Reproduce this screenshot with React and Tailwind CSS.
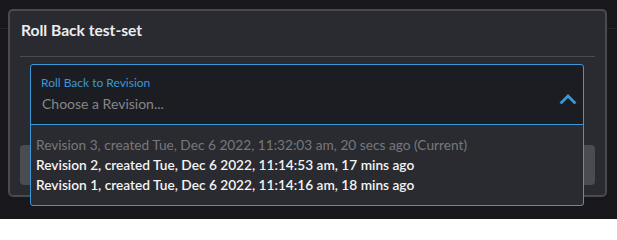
import { useState } from "react";

const revisions = [
  { id: 3, label: "Revision 3, created Tue, Dec 6 2022, 11:32:03 am, 20 secs ago (Current)", current: true },
  { id: 2, label: "Revision 2, created Tue, Dec 6 2022, 11:14:53 am, 17 mins ago" },
  { id: 1, label: "Revision 1, created Tue, Dec 6 2022, 11:14:16 am, 18 mins ago" },
];

function ChevronUp() {
  return (
    <svg width="18" height="11" viewBox="0 0 18 11" fill="none" className="text-[#3b98d8]">
      <path d="M2.5 9.5L9 3L15.5 9.5" stroke="currentColor" strokeWidth="2.8" strokeLinecap="square" />
    </svg>
  );
}

export default function App() {
  const [open] = useState(true);

  return (
    <div
      className="relative w-[617px] h-[219px] overflow-hidden bg-[#18181c]"
      style={{ fontFamily: "Lato, 'Noto Sans', sans-serif" }}
    >
      {/* page behind the modal */}
      <div className="h-[29px] border-b border-[#26262b]" />

      {/* Modal */}
      <div className="absolute left-[8px] top-[9px] w-[599px] h-[188px] rounded-[5px] border-2 border-[#4a4b50] bg-[#2a2b30] px-[10px] pt-[7px]">
        <h2 className="pl-[1px] text-[15.6px] leading-[24px] font-bold text-[#ececee]">
          Roll Back test-set
        </h2>
        <div className="mt-[14px] h-px bg-[#4a4b50]" />

        <div className="relative mt-[7px] ml-[10px] mr-[11px]">
          <div className="flex h-[61px] items-start justify-between rounded-t-[3px] border border-[#3b98d8] bg-[#1c1d22] pl-[10px] pr-[6px] pt-[10px]">
            <div className="flex flex-col">
              <span className="text-[12px] leading-[16px] text-[#3d97d4]">Roll Back to Revision</span>
              <span className="mt-[3px] ml-[1px] text-[14px] leading-[20px] text-[#85868b]">
                Choose a Revision...
              </span>
            </div>
            <div className="mt-[18px]">
              <ChevronUp />
            </div>
          </div>

          {open && (
            <ul className="absolute left-0 right-0 top-full z-10 -mt-px h-[82px] rounded-b-[3px] border border-[#3b98d8] bg-[#2a2b30] pl-[5px] pt-[10px]">
              {revisions.map((r) => (
                <li
                  key={r.id}
                  className={
                    r.current
                      ? "text-[13.7px] leading-[20px] text-[#77787d] whitespace-nowrap"
                      : "text-[13.7px] leading-[20px] font-semibold text-[#f4f4f5] whitespace-nowrap"
                  }
                >
                  {r.label}
                </li>
              ))}
            </ul>
          )}
        </div>

        {/* buttons under the open menu */}
        <div className="mt-[20px] flex justify-between">
          <button className="h-[40px] w-[120px] rounded-[4px] bg-[#4b4c51]" />
          <button className="h-[40px] w-[120px] rounded-[4px] bg-[#4b4c51]" />
        </div>
      </div>
    </div>
  );
}
